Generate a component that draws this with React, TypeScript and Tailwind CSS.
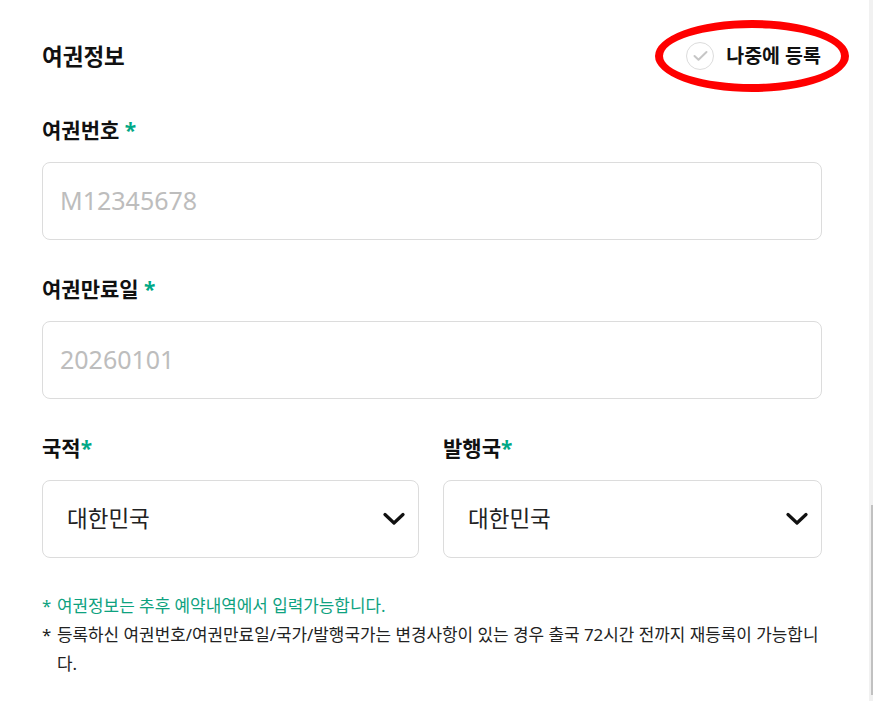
import React from "react";

const font = { fontFamily: '"Noto Sans", "Noto Sans CJK KR", sans-serif' };

function Chevron() {
  return (
    <svg width="22" height="14" viewBox="0 0 22 14" fill="none">
      <path d="M2 2.5 L11 11 L20 2.5" stroke="#111" strokeWidth="3.2" strokeLinecap="round" strokeLinejoin="round" />
    </svg>
  );
}

function Label({ text, spaced = true }: { text: string; spaced?: boolean }) {
  return (
    <div className="text-[21px] font-bold leading-[28px] text-[#111]">
      {text}
      {spaced ? " " : ""}
      <span className="text-[#00a886]">*</span>
    </div>
  );
}

function Select() {
  return (
    <div className="flex h-[78px] items-center justify-between rounded-[8px] border border-[#dcdcdc] bg-white pl-[24px] pr-[13px]">
      <span className="text-[22.5px] text-[#222]">대한민국</span>
      <Chevron />
    </div>
  );
}

export default function App() {
  return (
    <div className="relative flex min-h-[701px] w-full bg-white" style={font}>
      <div className="flex-1">
        <div className="ml-[42px] w-[780px] pt-[20px]">
          <div className="relative flex h-[72px] items-center justify-between">
            <h2 className="mt-[2px] text-[22.5px] font-bold leading-[30px] text-[#111]">여권정보</h2>
            <div className="flex items-center gap-[12px] pr-[1px]">
              <span className="flex h-[28px] w-[28px] items-center justify-center rounded-full border border-[#dcdcdc]">
                <svg width="15" height="12" viewBox="0 0 15 12" fill="none">
                  <path d="M1.5 6 L5.5 9.8 L13.5 2" stroke="#c6c6c6" strokeWidth="2" strokeLinecap="round" strokeLinejoin="round" />
                </svg>
              </span>
              <span className="text-[19.5px] font-bold text-[#111]">나중에 등록</span>
            </div>
            <div className="pointer-events-none absolute left-[613px] top-0 h-[72px] w-[194px] rounded-[50%] border-[8px] border-[#ff0000]" />
          </div>

          <div className="mt-[24px]">
            <Label text="여권번호" />
            <div className="mt-[18px] flex h-[78px] items-center rounded-[8px] border border-[#dcdcdc] pl-[17px]">
              <span className="text-[25px] text-[#bdbdbd]">M12345678</span>
            </div>
          </div>

          <div className="mt-[35px]">
            <Label text="여권만료일" />
            <div className="mt-[18px] flex h-[78px] items-center rounded-[8px] border border-[#dcdcdc] pl-[17px]">
              <span className="text-[25px] text-[#bdbdbd]">20260101</span>
            </div>
          </div>

          <div className="mt-[35px] grid grid-cols-[377px_379px] gap-x-[24px]">
            <div>
              <Label text="국적" spaced={false} />
              <div className="mt-[18px]">
                <Select />
              </div>
            </div>
            <div>
              <Label text="발행국" spaced={false} />
              <div className="mt-[18px]">
                <Select />
              </div>
            </div>
          </div>

          <div className="mt-[33px] flex flex-col text-[16.9px] leading-[29px]">
            <div className="flex text-[#0ea27f]">
              <span className="w-[15px] shrink-0">*</span>
              <span>여권정보는 추후 예약내역에서 입력가능합니다.</span>
            </div>
            <div className="flex text-[#222]">
              <span className="w-[15px] shrink-0">*</span>
              <span className="whitespace-nowrap">
                등록하신 여권번호/여권만료일/국가/발행국가는 변경사항이 있는 경우 출국 72시간 전까지 재등록이 가능합니
                <br />
                다.
              </span>
            </div>
          </div>
        </div>
      </div>
      <div className="relative w-[4px] shrink-0 bg-[#f1f1f1]">
        <div className="absolute right-0 top-[505px] h-[190px] w-[2px] bg-[#c1c1c1]" />
      </div>
    </div>
  );
}
